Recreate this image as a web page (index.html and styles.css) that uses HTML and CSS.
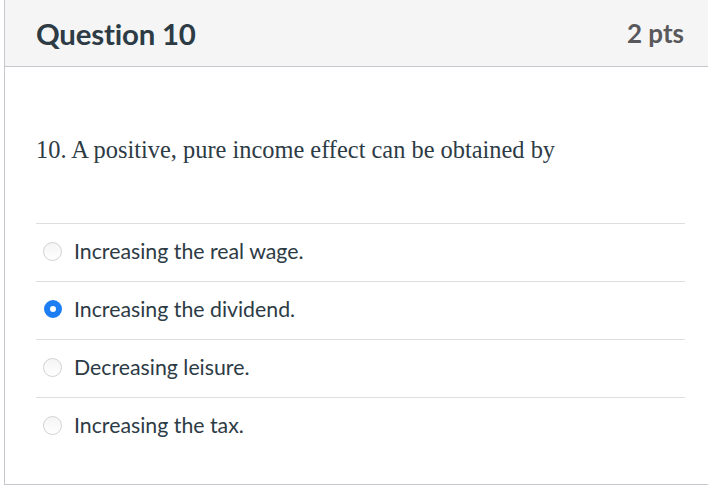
FILE: index.html
```html
<!DOCTYPE html>
<html>
<head>
<meta charset="utf-8">
<link rel="stylesheet" href="styles.css">
</head>
<body>
<div class="card">
  <div class="header">
    <h2 class="title">Question 10</h2>
    <span class="pts">2 pts</span>
  </div>
  <div class="content">
    <p class="question">10. A positive, pure income effect can be obtained by</p>
    <div class="answers">
      <label class="answer"><span class="radio"></span><span class="text">Increasing the real wage.</span></label>
      <label class="answer"><span class="radio checked"></span><span class="text">Increasing the dividend.</span></label>
      <label class="answer"><span class="radio"></span><span class="text">Decreasing leisure.</span></label>
      <label class="answer"><span class="radio"></span><span class="text">Increasing the tax.</span></label>
    </div>
  </div>
</div>
</body>
</html>
```
FILE: styles.css
```css
html, body {
  margin: 0;
  padding: 0;
  background: #fff;
  overflow: hidden;
}
.card {
  margin-left: 4px;
  height: 485px;
  box-sizing: border-box;
  border-left: 1px solid #c4c8cc;
  border-bottom: 1px solid #c4c8cc;
  display: flex;
  flex-direction: column;
}
.header {
  height: 67px;
  box-sizing: border-box;
  background: #f5f5f5;
  border-bottom: 1px solid #c4c8cc;
  display: flex;
  align-items: center;
  justify-content: space-between;
  padding: 0 24px 0 31px;
}
.title {
  margin: 0;
  font-family: Lato, "Liberation Sans", sans-serif;
  font-weight: 700;
  font-size: 29.4px;
  color: #2d3b45;
  letter-spacing: -0.2px;
}
.pts {
  font-family: Lato, "Liberation Sans", sans-serif;
  font-weight: 700;
  font-size: 26px;
  color: #59595c;
}
.content {
  padding: 0 23px 0 31px;
}
.question {
  margin: 65px 0 0 0;
  font-family: "Liberation Serif", serif;
  font-size: 24.4px;
  line-height: 36px;
  color: #2d3b45;
}
.answers {
  margin-top: 55px;
}
.answer {
  display: flex;
  align-items: center;
  height: 58px;
  box-sizing: border-box;
  border-top: 1px solid #dcdfe2;
  padding-left: 7px;
  padding-bottom: 3px;
}
.radio {
  width: 19px;
  height: 19px;
  box-sizing: border-box;
  border-radius: 50%;
  border: 1px solid #d0d3d6;
  background: linear-gradient(#f4f4f4, #ffffff);
  margin-right: 12px;
  flex: none;
}
.radio.checked {
  width: 18px;
  height: 18px;
  margin-left: 1px;
  border: 6px solid #1c7ef2;
  background: #fff;
}
.text {
  font-family: Lato, "Liberation Sans", sans-serif;
  font-size: 21.3px;
  color: #2d3b45;
}
```
